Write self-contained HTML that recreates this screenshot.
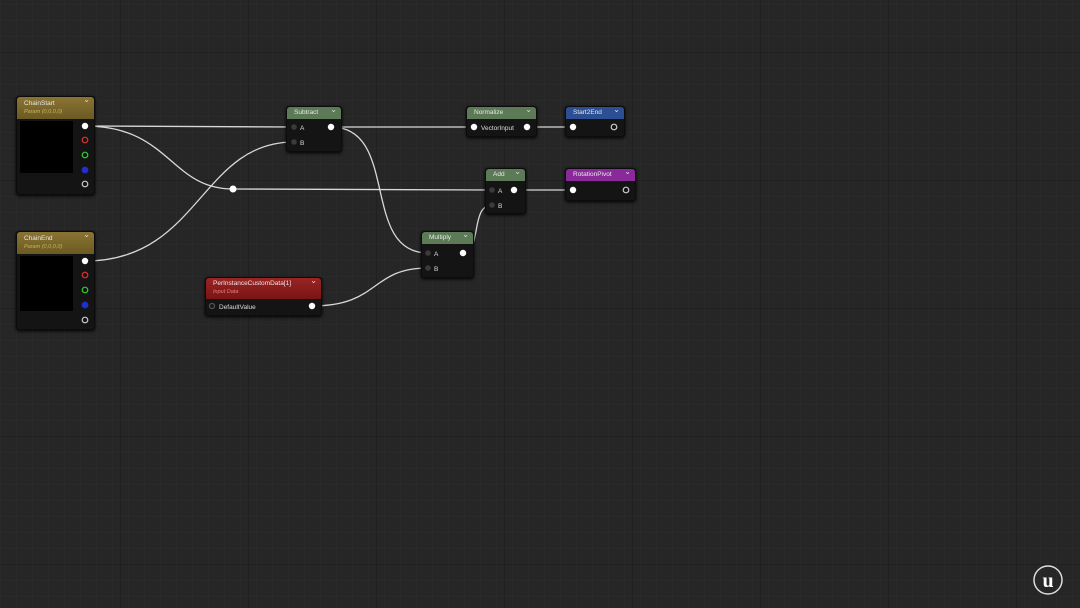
<!DOCTYPE html>
<html><head><style>
body{margin:0;width:1080px;height:608px;overflow:hidden;background:#262626;font-family:"Liberation Sans",sans-serif;position:relative}
.grid{position:absolute;inset:0;background-image:linear-gradient(#202020 1px,transparent 1px),linear-gradient(90deg,#202020 1px,transparent 1px),linear-gradient(#2a2a2a 1px,transparent 1px),linear-gradient(90deg,#2a2a2a 1px,transparent 1px);background-size:128px 128px,128px 128px,16px 16px,16px 16px;background-position:-8px 52px,-8px 52px,0 4px,0 4px}
.n{position:absolute;background:#141414;border-radius:3px;box-shadow:0 1px 3px #000;border:1px solid #0c0c0c}
.h{height:12px;border-radius:3px 3px 0 0;color:#e8e8e8;font-size:6.5px;line-height:12px;padding-left:7px;position:relative}
.h:after{content:"⌄";position:absolute;right:4px;top:-3px;font-size:8px;color:#ddd}
.sub{font-size:5.5px;font-style:italic;color:#c9b35a;line-height:7px}
</style></head><body>
<div class="grid"></div>
<svg width="1080" height="608" style="position:absolute;left:0;top:0" fill="none" stroke="#d8d8d8" stroke-width="1.3">
<path d="M85 126 L294 127"/>
<path d="M85 126 C170 126 170 189 233 189"/>
<path d="M233 189 L492 190"/>
<path d="M85 261 C200 261 200 142 294 142"/>
<path d="M331 127 L474 127"/>
<path d="M331 127 C400 127 360 253 428 253"/>
<path d="M527 127 L573 127"/>
<path d="M514 190 L573 190"/>
<path d="M463 253 C482 253 470 205 492 205"/>
<path d="M312 306 C380 306 370 268 428 268"/>
<circle cx="233" cy="189" r="3.5" fill="#fff" stroke="none"/>
</svg>

<div class="n" style="left:16px;top:96px;width:77px;height:97px">
 <div class="h" style="height:22px;background:linear-gradient(#8a7433,#6b5a23);line-height:11px;padding-top:1px;box-sizing:border-box">ChainStart<div class="sub">Param (0,0,0,0)</div></div>
 <div style="position:absolute;left:3px;top:24px;width:53px;height:52px;background:#000"></div>
</div>
<div class="n" style="left:16px;top:231px;width:77px;height:97px">
 <div class="h" style="height:22px;background:linear-gradient(#8a7433,#6b5a23);line-height:11px;padding-top:1px;box-sizing:border-box">ChainEnd<div class="sub">Param (0,0,0,0)</div></div>
 <div style="position:absolute;left:3px;top:24px;width:53px;height:55px;background:#000"></div>
</div>
<div class="n" style="left:286px;top:106px;width:54px;height:44px"><div class="h" style="background:#5d7a56">Subtract</div></div>
<div class="n" style="left:466px;top:106px;width:69px;height:29px"><div class="h" style="background:#5d7a56">Normalize</div></div>
<div class="n" style="left:565px;top:106px;width:58px;height:29px"><div class="h" style="background:#2c4f93">Start2End</div></div>
<div class="n" style="left:485px;top:168px;width:39px;height:44px"><div class="h" style="background:#5d7a56">Add</div></div>
<div class="n" style="left:565px;top:168px;width:69px;height:31px"><div class="h" style="background:#8a2a9a">RotationPivot</div></div>
<div class="n" style="left:421px;top:231px;width:51px;height:45px"><div class="h" style="background:#5d7a56">Multiply</div></div>
<div class="n" style="left:205px;top:277px;width:115px;height:37px">
 <div class="h" style="height:21px;background:linear-gradient(#9a2424,#7a1515);line-height:11px;box-sizing:border-box">PerInstanceCustomData[1]<div class="sub" style="color:#e08080">Input Data</div></div>
</div>

<svg width="1080" height="608" style="position:absolute;left:0;top:0">
<g fill="#fff">
<circle cx="85" cy="126" r="3.2"/><circle cx="85" cy="261" r="3.2"/>
<circle cx="331" cy="127" r="3.2"/><circle cx="474" cy="127" r="3.2"/><circle cx="527" cy="127" r="3.2"/>
<circle cx="573" cy="127" r="3.2"/><circle cx="514" cy="190" r="3.2"/><circle cx="573" cy="190" r="3.2"/>
<circle cx="463" cy="253" r="3.2"/><circle cx="312" cy="306" r="3.2"/>
</g>
<g fill="none" stroke-width="1.2">
<circle cx="85" cy="140" r="2.8" stroke="#e03030"/><circle cx="85" cy="155" r="2.8" stroke="#30d030"/>
<circle cx="85" cy="170" r="2.8" stroke="#2030d0" fill="#2030d0"/><circle cx="85" cy="184" r="2.8" stroke="#ccc"/>
<circle cx="85" cy="275" r="2.8" stroke="#e03030"/><circle cx="85" cy="290" r="2.8" stroke="#30d030"/>
<circle cx="85" cy="305" r="2.8" stroke="#2030d0" fill="#2030d0"/><circle cx="85" cy="320" r="2.8" stroke="#ccc"/>
<circle cx="614" cy="127" r="2.8" stroke="#ccc"/><circle cx="626" cy="190" r="2.8" stroke="#ccc"/>
<circle cx="212" cy="306" r="2.5" stroke="#555"/>
</g>
<g fill="#3a3a3a">
<circle cx="294" cy="127" r="2.8"/><circle cx="294" cy="142" r="2.8"/>
<circle cx="492" cy="190" r="2.8"/><circle cx="492" cy="205" r="2.8"/>
<circle cx="428" cy="253" r="2.8"/><circle cx="428" cy="268" r="2.8"/>
</g>
<g fill="#ddd" font-family="Liberation Sans" font-size="6.5">
<text x="300" y="130">A</text><text x="300" y="145">B</text>
<text x="481" y="130">VectorInput</text>
<text x="498" y="193">A</text><text x="498" y="208">B</text>
<text x="434" y="256">A</text><text x="434" y="271">B</text>
<text x="219" y="309">DefaultValue</text>
</g>
<circle cx="1048" cy="580" r="14" fill="none" stroke="#ddd" stroke-width="1.5"/>
<text x="1048" y="587" text-anchor="middle" fill="#fff" font-family="Liberation Serif" font-weight="bold" font-size="20">u</text>
</svg>
</body></html>
